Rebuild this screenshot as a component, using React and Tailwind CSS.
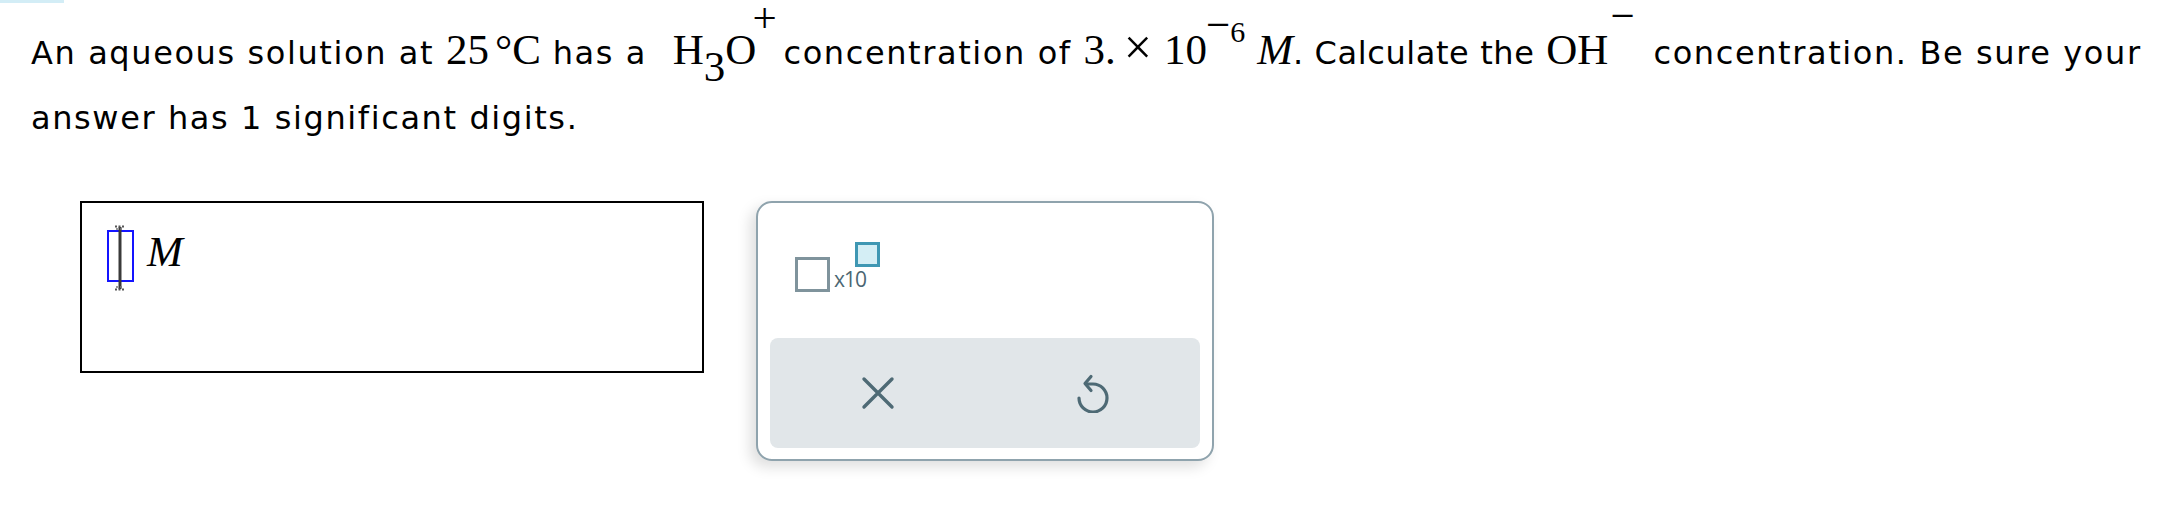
import React from "react";

function Serif({ children, className = "" }) {
  return (
    <span className={"font-['Liberation_Serif','Times_New_Roman',serif] text-[43px] leading-none tracking-normal " + className}>
      {children}
    </span>
  );
}

function Cursor() {
  return (
    <div className="relative mt-[2px] h-[52px] w-[27px] border-[2.5px] border-[#1414ff]">
      <svg
        className="absolute left-[-3px] top-[-8px]"
        width="28"
        height="68"
        viewBox="0 0 28 68"
      >
        <line x1="14" y1="3" x2="14" y2="65" stroke="#3a3a3a" strokeWidth="3" />
        <line x1="9" y1="2.5" x2="19" y2="2.5" stroke="#555" strokeWidth="2" strokeDasharray="2 1.5" />
        <line x1="10" y1="5" x2="18" y2="5" stroke="#777" strokeWidth="1.5" strokeDasharray="2 2" />
        <line x1="9" y1="65.5" x2="19" y2="65.5" stroke="#555" strokeWidth="2" strokeDasharray="2 1.5" />
        <line x1="10" y1="63" x2="18" y2="63" stroke="#777" strokeWidth="1.5" strokeDasharray="2 2" />
      </svg>
    </div>
  );
}

function XIcon() {
  return (
    <svg width="34" height="34" viewBox="0 0 34 34" fill="none">
      <path d="M3 3 L31 31 M31 3 L3 31" stroke="#4e6a75" strokeWidth="3.4" strokeLinecap="round" />
    </svg>
  );
}

function UndoIcon() {
  return (
    <svg width="36" height="40" viewBox="0 0 36 40" fill="none">
      <path
        d="M4 25 A14 14 0 1 0 18 11 L12 11"
        stroke="#4e6a75"
        strokeWidth="3.2"
        strokeLinecap="round"
        strokeLinejoin="round"
      />
      <path
        d="M16 3.5 L10 10.5 L16 17.5"
        stroke="#4e6a75"
        strokeWidth="3.2"
        strokeLinecap="round"
        strokeLinejoin="round"
      />
    </svg>
  );
}

export default function App() {
  return (
    <div className="min-h-[528px] w-full bg-white">
      <div className="h-[3px] w-[64px] bg-[#d3edf6]" />
      <div className="pl-[31px] pt-[18px]">
        <p className="font-['DejaVu_Sans','Verdana',sans-serif] text-[32px] leading-[65px] tracking-[1.6px] text-black whitespace-nowrap">
          An aqueous solution at <Serif>25<span className="ml-[6px]">°C</span></Serif> has a{" "}
          <Serif className="ml-[14px] mr-[-5px]">
            H<span className="relative top-[17px]">3</span>O
            <span className="relative top-[-32px] ml-[-4px] inline-block leading-[24px]">+</span>
          </Serif>{" "}
          concentration of{" "}
          <Serif>
            3.<span className="ml-[8px] mr-[12px] text-[50px]">×</span>10
            <span className="relative top-[-25px] ml-[-1px] inline-block leading-[24px]">−</span>
            <span className="relative top-[-22px] inline-block text-[30px] leading-[24px]">6</span>
            <span className="ml-[12px] italic">M</span>
          </Serif>
          <span className="tracking-[0.6px]">. Calculate the</span>{" "}
          <Serif className="mr-[7px]">
            OH<span className="relative top-[-34px] ml-[2px] inline-block leading-[24px]">−</span>
          </Serif>{" "}
          concentration. Be sure your
          <br />
          answer has 1 significant digits.
        </p>
      </div>

      <div className="mt-[50px] flex items-start gap-[52px] pl-[80px]">
        <div className="h-[172px] w-[624px] border-2 border-black">
          <div className="flex items-start pl-[25px] pt-[25px]">
            <Cursor />
            <span className="ml-[13px] mt-[1px] font-['Liberation_Serif','Times_New_Roman',serif] text-[43px] italic leading-[46px] text-black">
              M
            </span>
          </div>
        </div>

        <div className="flex h-[260px] w-[458px] flex-col rounded-[16px] border-2 border-[#8fa3ad] bg-white shadow-[-6px_6px_14px_rgba(0,0,0,0.13)]">
          <div className="flex flex-1 items-start pl-[37px] pt-[39px]">
            <div className="mt-[15px] flex items-end">
              <div className="h-[35px] w-[35px] border-[3px] border-[#7f939c] bg-white" />
              <span className="mb-[2px] ml-[4px] font-['Open_Sans',sans-serif] text-[21px] font-medium leading-none tracking-[-1px] text-[#4b6672]">
                x10
              </span>
            </div>
            <div className="ml-[-11px] h-[25px] w-[25px] border-[3px] border-[#3f97b3] bg-[#d4eef5]" />
          </div>
          <div className="mx-[12px] mb-[11px] grid h-[110px] grid-cols-2 items-center justify-items-center rounded-[8px] bg-[#e1e6e9]">
            <button className="flex items-center justify-center">
              <XIcon />
            </button>
            <button className="flex items-center justify-center">
              <UndoIcon />
            </button>
          </div>
        </div>
      </div>
    </div>
  );
}
